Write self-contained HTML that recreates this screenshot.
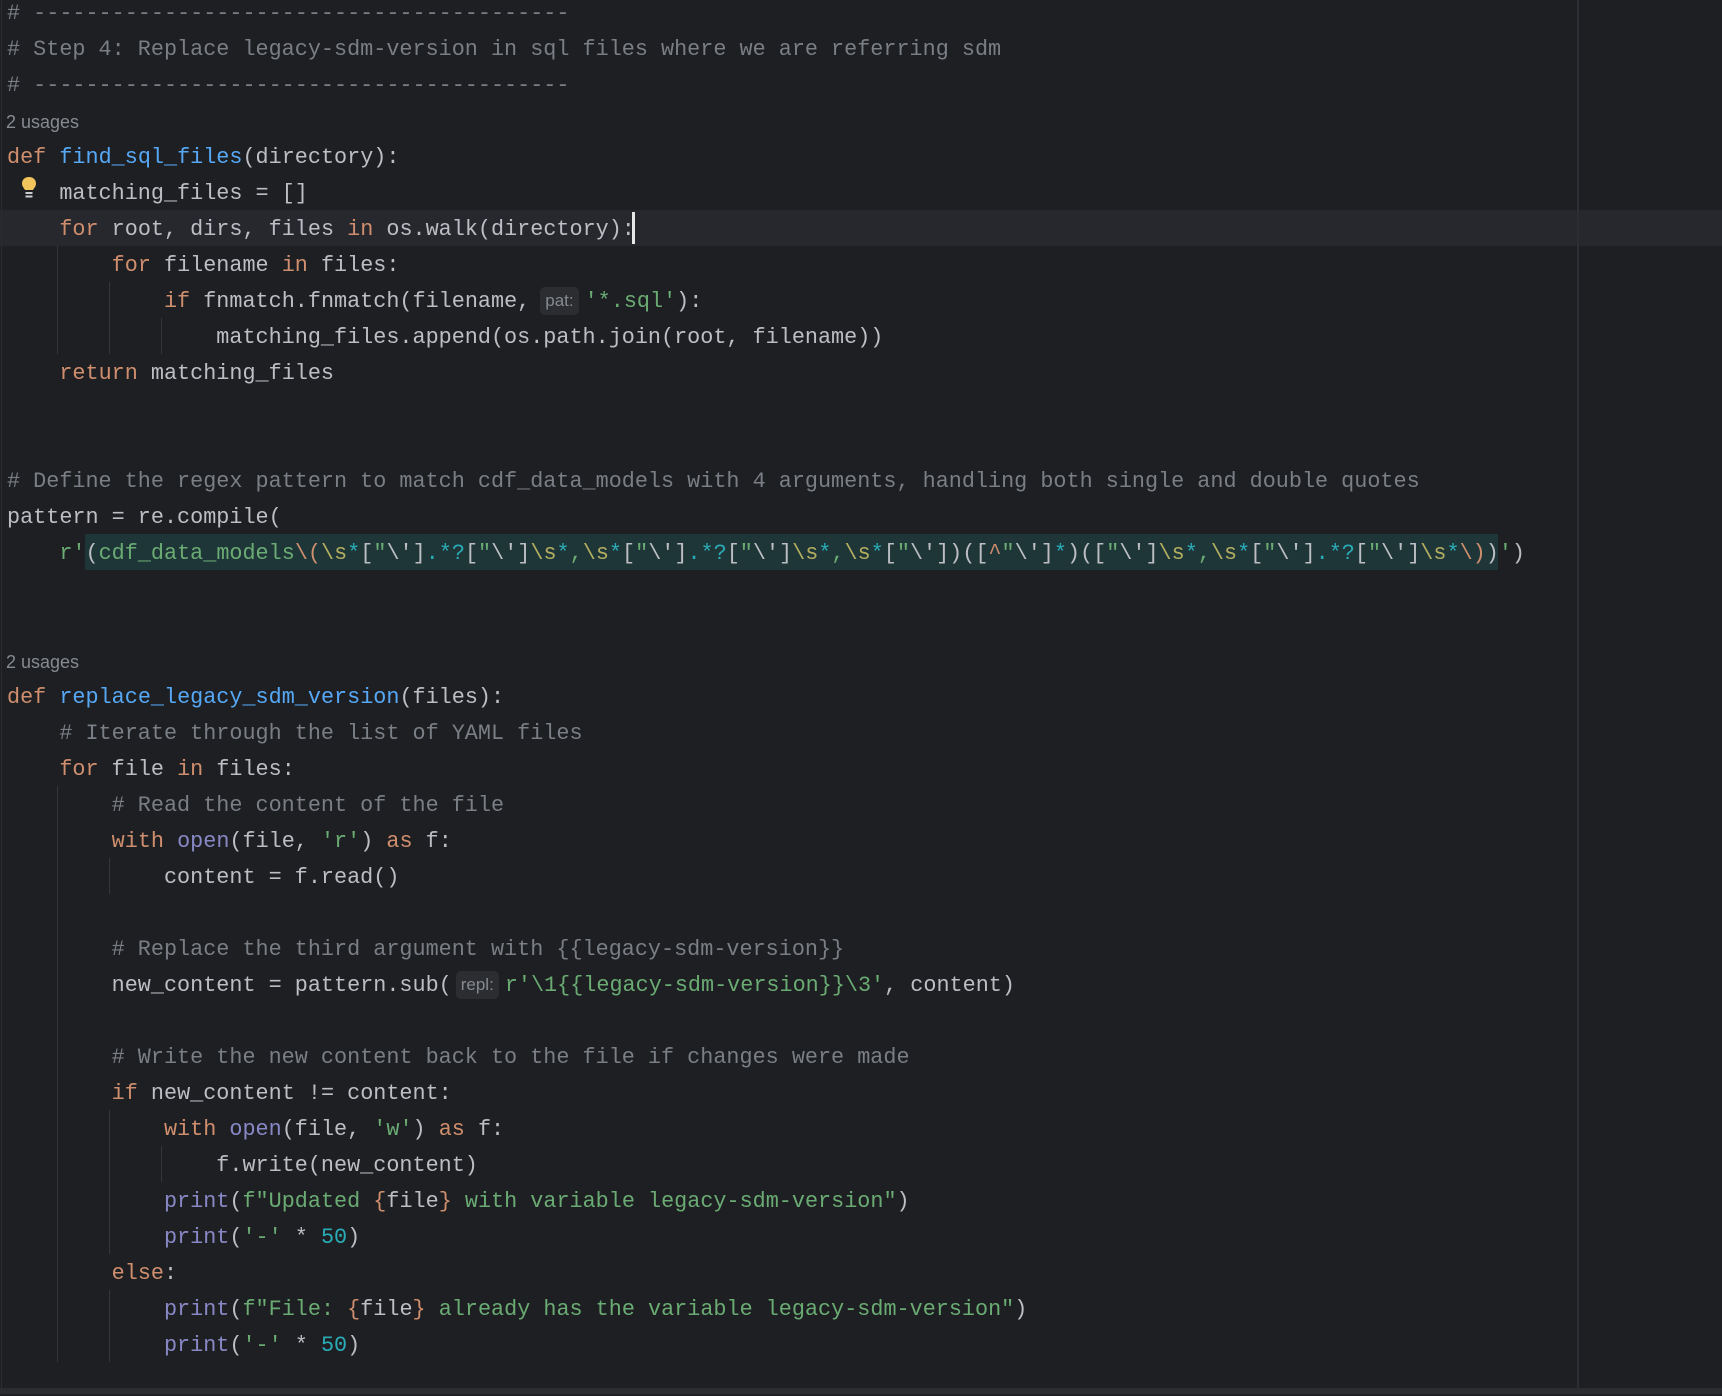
<!DOCTYPE html>
<html><head><meta charset="utf-8"><style>
html,body{margin:0;padding:0}
body{width:1722px;height:1394px;background:#1e1f22;position:relative;overflow:hidden;font-family:"Liberation Mono",monospace;font-size:21.8px;color:#bcbec4}
#t{position:absolute;left:0;top:2px;width:1722px;height:1394px}
.l{position:absolute;left:7px;height:36px;line-height:36px;white-space:pre}
.k{color:#cf8e6d}.f{color:#56a8f5}.c{color:#7a7e85}.s{color:#6aab73}.n{color:#2aacb8}.b{color:#8888c6}
.y{color:#b3ae60}.o{color:#cf8e6d}
.u{position:absolute;left:6px;font-family:"Liberation Sans",sans-serif;font-size:18px;color:#868a91;height:36px;line-height:36px}
.hint{display:inline-block;font-family:"Liberation Sans",sans-serif;font-size:17px;color:#868a91;background:#2b2d30;border-radius:5px;padding:0 5px;line-height:28px;margin:0 6px 0 10px;vertical-align:1px}
.g{position:absolute;width:1px;background:#34363b}
</style></head><body>
<div style="position:absolute;left:0;top:210px;width:1722px;height:36px;background:#26282e"></div>
<div style="position:absolute;left:85px;top:534px;width:1413px;height:36px;background:#1f3638"></div>
<div style="position:absolute;left:1577px;top:0;width:2px;height:1394px;background:#2c2e33"></div>
<div style="position:absolute;left:1px;top:0;width:1px;height:1394px;background:#2a2c30"></div>
<div style="position:absolute;left:0;top:1388px;width:1722px;height:6px;background:#2a2c30"></div>

<div class="g" style="left:57px;top:246px;height:108px"></div>
<div class="g" style="left:109px;top:282px;height:72px"></div>
<div class="g" style="left:161px;top:318px;height:36px"></div>
<div class="g" style="left:57px;top:786px;height:576px"></div>
<div class="g" style="left:109px;top:858px;height:36px"></div>
<div class="g" style="left:109px;top:1110px;height:144px"></div>
<div class="g" style="left:161px;top:1146px;height:36px"></div>
<div class="g" style="left:109px;top:1290px;height:72px"></div>

<svg style="position:absolute;left:20px;top:176px" width="18" height="26" viewBox="0 0 18 26"><path d="M9 1C4.5 1 2 4 2 7.5c0 3 2 4.5 3 6.5h8c1-2 3-3.5 3-6.5C16 4 13.5 1 9 1z" fill="#f2c55c"/><rect x="5.5" y="16" width="7" height="2" fill="#c9ccd1"/><rect x="5.5" y="19.5" width="7" height="2" fill="#c9ccd1"/></svg>
<div style="position:absolute;left:632px;top:212px;width:3px;height:32px;background:#e8e8e8"></div>

<div id="t">
<div class="l c" style="top:-6px"># -----------------------------------------</div>
<div class="l c" style="top:30px"># Step 4: Replace legacy-sdm-version in sql files where we are referring sdm</div>
<div class="l c" style="top:66px"># -----------------------------------------</div>
<div class="u" style="top:102px">2 usages</div>
<div class="l" style="top:138px"><span class="k">def</span> <span class="f">find_sql_files</span>(directory):</div>
<div class="l" style="top:174px">    matching_files = []</div>
<div class="l" style="top:210px">    <span class="k">for</span> root, dirs, files <span class="k">in</span> os.walk(directory):</div>
<div class="l" style="top:246px">        <span class="k">for</span> filename <span class="k">in</span> files:</div>
<div class="l" style="top:282px">            <span class="k">if</span> fnmatch.fnmatch(filename,<span class="hint">pat:</span><span class="s">'*.sql'</span>):</div>
<div class="l" style="top:318px">                matching_files.append(os.path.join(root, filename))</div>
<div class="l" style="top:354px">    <span class="k">return</span> matching_files</div>
<div class="l c" style="top:462px"># Define the regex pattern to match cdf_data_models with 4 arguments, handling both single and double quotes</div>
<div class="l" style="top:498px">pattern = re.compile(</div>
<div class="l" style="top:534px">    <span class="s">r'</span>(<span class="s">cdf_data_models</span><span class="o">\(</span><span class="y">\s</span><span class="n">*</span>[<span class="s">"</span>\']<span class="n">.*?</span>[<span class="s">"</span>\']<span class="y">\s</span><span class="n">*</span><span class="s">,</span><span class="y">\s</span><span class="n">*</span>[<span class="s">"</span>\']<span class="n">.*?</span>[<span class="s">"</span>\']<span class="y">\s</span><span class="n">*</span><span class="s">,</span><span class="y">\s</span><span class="n">*</span>[<span class="s">"</span>\'])([<span class="o">^</span><span class="s">"</span>\']<span class="n">*</span>)([<span class="s">"</span>\']<span class="y">\s</span><span class="n">*</span><span class="s">,</span><span class="y">\s</span><span class="n">*</span>[<span class="s">"</span>\']<span class="n">.*?</span>[<span class="s">"</span>\']<span class="y">\s</span><span class="n">*</span><span class="o">\)</span>)<span class="s">'</span>)</div>
<div class="u" style="top:642px">2 usages</div>
<div class="l" style="top:678px"><span class="k">def</span> <span class="f">replace_legacy_sdm_version</span>(files):</div>
<div class="l c" style="top:714px">    # Iterate through the list of YAML files</div>
<div class="l" style="top:750px">    <span class="k">for</span> file <span class="k">in</span> files:</div>
<div class="l c" style="top:786px">        # Read the content of the file</div>
<div class="l" style="top:822px">        <span class="k">with</span> <span class="b">open</span>(file, <span class="s">'r'</span>) <span class="k">as</span> f:</div>
<div class="l" style="top:858px">            content = f.read()</div>
<div class="l c" style="top:930px">        # Replace the third argument with {{legacy-sdm-version}}</div>
<div class="l" style="top:966px">        new_content = pattern.sub(<span class="hint" style="margin-left:4px">repl:</span><span class="s">r'\1{{legacy-sdm-version}}\3'</span>, content)</div>
<div class="l c" style="top:1038px">        # Write the new content back to the file if changes were made</div>
<div class="l" style="top:1074px">        <span class="k">if</span> new_content != content:</div>
<div class="l" style="top:1110px">            <span class="k">with</span> <span class="b">open</span>(file, <span class="s">'w'</span>) <span class="k">as</span> f:</div>
<div class="l" style="top:1146px">                f.write(new_content)</div>
<div class="l" style="top:1182px">            <span class="b">print</span>(<span class="s">f"Updated </span><span class="o">{</span>file<span class="o">}</span><span class="s"> with variable legacy-sdm-version"</span>)</div>
<div class="l" style="top:1218px">            <span class="b">print</span>(<span class="s">'-'</span> * <span class="n">50</span>)</div>
<div class="l" style="top:1254px">        <span class="k">else</span>:</div>
<div class="l" style="top:1290px">            <span class="b">print</span>(<span class="s">f"File: </span><span class="o">{</span>file<span class="o">}</span><span class="s"> already has the variable legacy-sdm-version"</span>)</div>
<div class="l" style="top:1326px">            <span class="b">print</span>(<span class="s">'-'</span> * <span class="n">50</span>)</div>
</div>
</body></html>
